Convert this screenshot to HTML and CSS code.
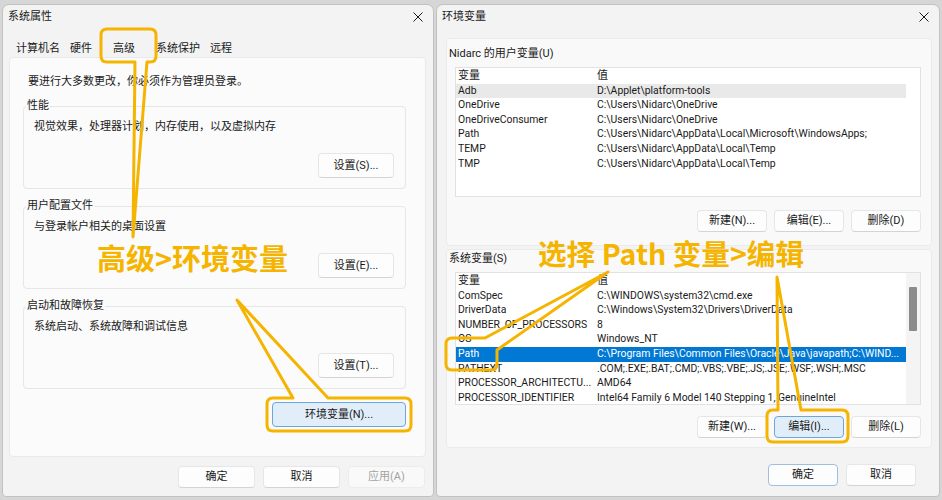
FILE: index.html
```html
<!DOCTYPE html>
<html lang="zh-CN">
<head>
    <meta charset="UTF-8">
    <title>系统属性 - 环境变量</title>
    <link rel="stylesheet" href="styles.css">
</head>
<body>
<div class="screen">

    <!-- 系统属性 -->
    <div class="dialog sys">
        <div class="titlebar">
            <span>系统属性</span>
            <span class="close"><svg width="10" height="10" viewBox="0 0 10 10"><path d="M0.5 0.5L9.5 9.5M9.5 0.5L0.5 9.5" stroke="#1a1a1a" stroke-width="1"/></svg></span>
        </div>
        <div class="tabs">
            <span class="tab">计算机名</span>
            <span class="tab">硬件</span>
            <span class="tab active">高级</span>
            <span class="tab">系统保护</span>
            <span class="tab">远程</span>
        </div>
        <div class="tabpanel">
            <p class="notice">要进行大多数更改，你必须作为管理员登录。</p>
            <fieldset class="group">
                <legend>性能</legend>
                <p>视觉效果，处理器计划，内存使用，以及虚拟内存</p>
                <div class="group-actions"><button class="btn">设置(S)...</button></div>
            </fieldset>
            <fieldset class="group">
                <legend>用户配置文件</legend>
                <p>与登录帐户相关的桌面设置</p>
                <div class="group-actions"><button class="btn">设置(E)...</button></div>
            </fieldset>
            <fieldset class="group">
                <legend>启动和故障恢复</legend>
                <p>系统启动、系统故障和调试信息</p>
                <div class="group-actions"><button class="btn">设置(T)...</button></div>
            </fieldset>
            <div class="env-row"><button class="btn focus env-btn">环境变量(N)...</button></div>
        </div>
        <div class="footer">
            <button class="btn wide">确定</button>
            <button class="btn wide">取消</button>
            <button class="btn wide" disabled>应用(A)</button>
        </div>
    </div>

    <!-- 环境变量 -->
    <div class="dialog env">
        <div class="titlebar">
            <span>环境变量</span>
            <span class="close"><svg width="10" height="10" viewBox="0 0 10 10"><path d="M0.5 0.5L9.5 9.5M9.5 0.5L0.5 9.5" stroke="#1a1a1a" stroke-width="1"/></svg></span>
        </div>

        <div class="panel user">
            <div class="panel-label">Nidarc 的用户变量(U)</div>
            <div class="list">
                <div class="rows">
                    <div class="row head"><span>变量</span><span>值</span></div>
                    <div class="row hover"><span>Adb</span><span>D:\Applet\platform-tools</span></div>
                    <div class="row"><span>OneDrive</span><span>C:\Users\Nidarc\OneDrive</span></div>
                    <div class="row"><span>OneDriveConsumer</span><span>C:\Users\Nidarc\OneDrive</span></div>
                    <div class="row"><span>Path</span><span>C:\Users\Nidarc\AppData\Local\Microsoft\WindowsApps;</span></div>
                    <div class="row"><span>TEMP</span><span>C:\Users\Nidarc\AppData\Local\Temp</span></div>
                    <div class="row"><span>TMP</span><span>C:\Users\Nidarc\AppData\Local\Temp</span></div>
                </div>
                <div class="scroll-space"></div>
            </div>
            <div class="actions">
                <button class="btn mid">新建(N)...</button>
                <button class="btn mid">编辑(E)...</button>
                <button class="btn mid">删除(D)</button>
            </div>
        </div>

        <div class="panel system">
            <div class="panel-label">系统变量(S)</div>
            <div class="list">
                <div class="rows">
                    <div class="row head"><span>变量</span><span>值</span></div>
                    <div class="row"><span>ComSpec</span><span>C:\WINDOWS\system32\cmd.exe</span></div>
                    <div class="row"><span>DriverData</span><span>C:\Windows\System32\Drivers\DriverData</span></div>
                    <div class="row"><span>NUMBER_OF_PROCESSORS</span><span>8</span></div>
                    <div class="row"><span>OS</span><span>Windows_NT</span></div>
                    <div class="row selected"><span>Path</span><span>C:\Program Files\Common Files\Oracle\Java\javapath;C:\WIND...</span></div>
                    <div class="row"><span>PATHEXT</span><span>.COM;.EXE;.BAT;.CMD;.VBS;.VBE;.JS;.JSE;.WSF;.WSH;.MSC</span></div>
                    <div class="row"><span>PROCESSOR_ARCHITECTU...</span><span>AMD64</span></div>
                    <div class="row"><span>PROCESSOR_IDENTIFIER</span><span>Intel64 Family 6 Model 140 Stepping 1, GenuineIntel</span></div>
                </div>
                <div class="scrollbar"><div class="thumb"></div></div>
            </div>
            <div class="actions">
                <button class="btn mid">新建(W)...</button>
                <button class="btn mid focus">编辑(I)...</button>
                <button class="btn mid">删除(L)</button>
            </div>
        </div>

        <div class="footer env-footer">
            <button class="btn mid default">确定</button>
            <button class="btn mid">取消</button>
        </div>
    </div>

    <!-- 标注 -->
    <svg class="marks" width="942" height="500" viewBox="0 0 942 500">
        <g fill="none" stroke="#f5b400" stroke-width="3" stroke-linejoin="round">
            <path d="M107 29H150Q156 29 156 35V56Q156 62 150 62H147L133 237L135 62H107Q101 62 101 56V35Q101 29 107 29Z"/>
            <path d="M273 398H293L237 300L328 398H405Q411 398 411 404V425Q411 431 405 431H273Q267 431 267 425V404Q267 398 273 398Z"/>
            <path d="M452 338H485L608 272L497 350V364Q497 370 491 370H452Q446 370 446 364V344Q446 338 452 338Z"/>
            <path d="M773 410H778L777 277L801 410H842Q848 410 848 416V436Q848 442 842 442H773Q767 442 767 436V416Q767 410 773 410Z"/>
        </g>
        <text class="mark-text" x="97" y="270" font-size="29">高级&gt;环境变量</text>
        <text class="mark-text" x="538" y="265" font-size="28.6">选择 Path 变量&gt;编辑</text>
    </svg>
</div>
</body>
</html>
```

FILE: styles.css
```css
* {
    box-sizing: border-box;
}
body {
    margin: 0;
    background-color: #d6d6d6;
    font-family: Roboto, "Noto Sans CJK SC", sans-serif;
    font-size: 11px;
    line-height: 14px;
    color: #1a1a1a;
}
.screen {
    position: relative;
    width: 942px;
    height: 500px;
    display: flex;
    gap: 2px;
    padding: 4px 2px 3px 2px;
}
.dialog {
    display: flex;
    flex-direction: column;
    background-color: #f3f3f3;
    border: 1px solid #c2c2c2;
    border-radius: 7px 7px 4px 4px;
}
.sys {
    width: 432px;
}
.env {
    width: 504px;
}
.titlebar {
    height: 23px;
    display: flex;
    align-items: center;
    justify-content: space-between;
    padding-left: 5px;
}
.close {
    width: 30px;
    display: flex;
    justify-content: center;
}

/* tabs */
.tabs {
    height: 29px;
    display: flex;
    padding: 14px 0 0 8px;
}
.tab {
    padding: 0 5px;
}
.tab.active {
    padding: 0 16px;
}
.tabpanel {
    height: 400px;
    margin: 0 7px 0 6px;
    padding: 17px 19px 0 13px;
    background-color: #fbfbfb;
    border: 1px solid #e9e9e9;
    border-radius: 4px;
}
.notice {
    margin: 0;
    padding-left: 5px;
}
.group {
    margin: 10px 0 0;
    padding: 7px 11px 10px 10px;
    border: 1px solid #e6e6e6;
    border-radius: 4px;
    min-width: 0;
}
.group legend {
    padding: 0 1px;
    margin-left: -8px;
}
.group p {
    margin: 0;
}
.group-actions {
    display: flex;
    justify-content: flex-end;
    margin-top: 19px;
}
.env-row {
    display: flex;
    justify-content: flex-end;
    margin-top: 13px;
}

/* buttons */
.btn {
    font: inherit;
    height: 25px;
    width: 76px;
    padding: 0;
    background-color: #fdfdfd;
    color: #1a1a1a;
    border: 1px solid #e6e6e6;
    border-bottom-color: #d4d4d4;
    border-radius: 4px;
}
.btn:disabled {
    color: #a3a3a3;
    background-color: #f9f9f9;
    border-color: #ececec;
}
.btn.wide {
    width: 77px;
    height: 22px;
}
.btn.mid {
    width: 70px;
    height: 22px;
}
.btn.focus {
    background-color: #e1eefa;
    border: 1px solid #6fa6da;
}
.btn.default {
    border-color: #9fbfdd;
}
.env-btn {
    width: 134px;
}
.footer {
    display: flex;
    justify-content: flex-end;
    gap: 8px;
    padding: 9px 8px 0 0;
}

/* environment variables */
.panel {
    margin: 0 7px 0 9px;
    background-color: #f9f9f9;
    border: 1px solid #ebebeb;
    border-radius: 4px;
}
.panel.user {
    margin-top: 10px;
    padding: 8px 10px 13px 2px;
}
.panel.system {
    margin-top: 3px;
    padding: 2px 10px 9px 2px;
}
.panel-label {
    line-height: 14px;
}
.list {
    display: flex;
    margin-left: 6px;
    background-color: #fff;
    border: 1px solid #e2e2e2;
    overflow: hidden;
    font-size: 10.4px;
}
.user .list {
    height: 130px;
    margin-top: 6px;
}
.system .list {
    height: 133px;
    margin-top: 6px;
}
.rows {
    flex: 1;
    min-width: 0;
    padding-top: 1px;
}
.row {
    display: grid;
    grid-template-columns: 139px minmax(0, 1fr);
    height: 14.6px;
    line-height: 14.6px;
    padding-left: 2px;
    white-space: nowrap;
    overflow: hidden;
}
.row span {
    overflow: hidden;
}
.row.head {
    font-size: 11px;
}
.row.hover {
    background-color: #e9e9e9;
}
.row.selected {
    background-color: #0078d4;
    color: #fff;
}
.scroll-space {
    width: 14px;
}
.scrollbar {
    width: 14px;
    background-color: #f4f4f4;
    padding: 14px 0 0 3px;
}
.thumb {
    width: 8px;
    height: 44px;
    background-color: #8b8b8b;
    border-radius: 1px;
}
.actions {
    display: flex;
    justify-content: flex-end;
    gap: 7px;
}
.user .actions {
    margin-top: 13px;
}
.system .actions {
    margin-top: 11px;
}
.env-footer {
    padding: 16px 23px 0 0;
}

/* annotations */
.marks {
    position: absolute;
    left: 0;
    top: 0;
    pointer-events: none;
}
.mark-text {
    font-family: "Noto Sans CJK SC", sans-serif;
    font-weight: 700;
    fill: #f5b400;
}
```
